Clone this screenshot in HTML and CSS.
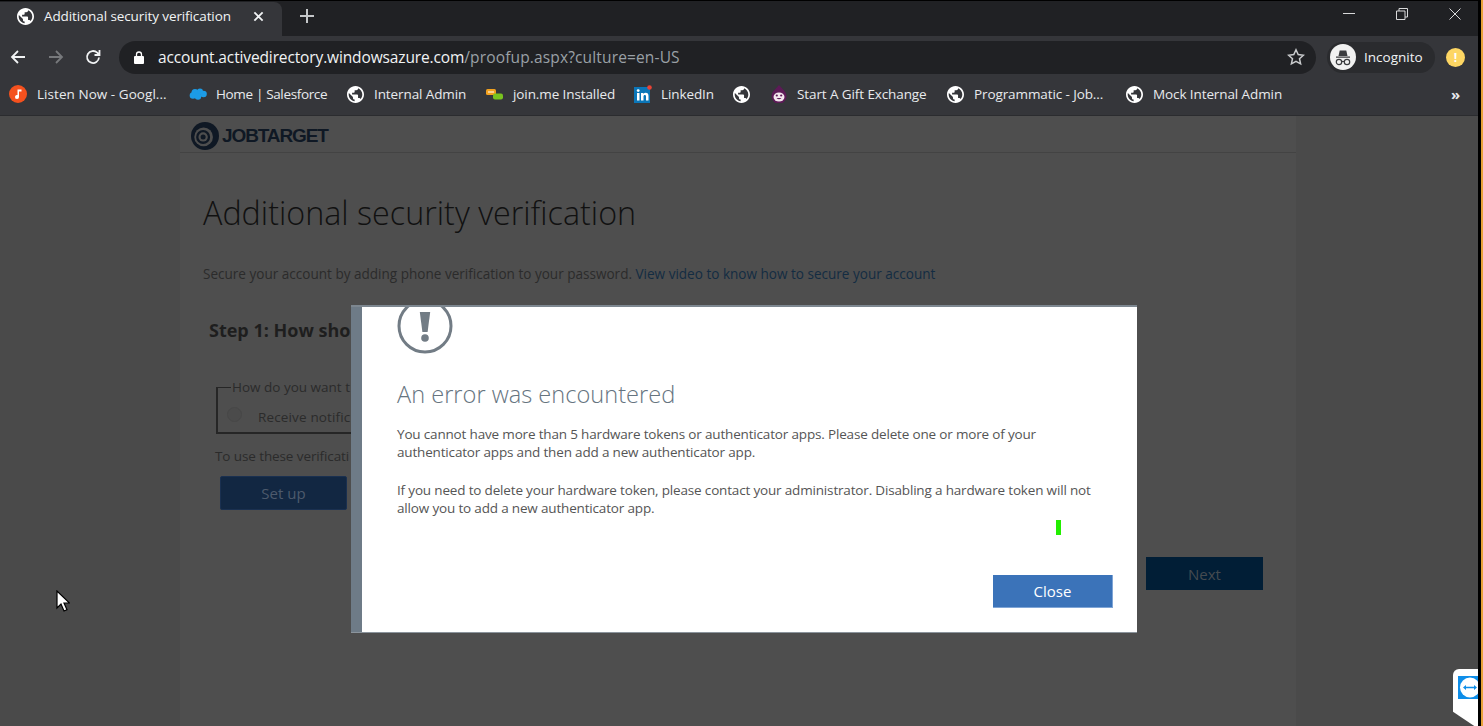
FILE: index.html
```html
<!DOCTYPE html>
<html lang="en">
<head>
  <meta charset="UTF-8" />
  <title>Additional security verification</title>
  <link rel="stylesheet" href="styles.css">
</head>
<body>
  <svg class="defs" width="0" height="0">
    <symbol id="globe" viewBox="2 2 20 20">
      <path fill="#fff" d="M12 2C6.48 2 2 6.48 2 12s4.48 10 10 10 10-4.48 10-10S17.52 2 12 2zm-1 17.93c-3.95-.49-7-3.85-7-7.93 0-.62.08-1.21.21-1.79L9 15v1c0 1.1.9 2 2 2v1.93zm6.9-2.54c-.26-.81-1-1.39-1.9-1.39h-1v-3c0-.55-.45-1-1-1H8v-2h2c.55 0 1-.45 1-1V7h2c1.1 0 2-.9 2-2v-.41c2.93 1.19 5 4.06 5 7.41 0 2.08-.8 3.97-2.1 5.39z"/>
    </symbol>
  </svg>

  <div class="desktop">
    <div class="browser">
      <div class="tabstrip">
        <div class="tab">
          <svg class="globe"><use href="#globe"/></svg>
          <span class="tab-title">Additional security verification</span>
          <svg class="tab-close" viewBox="0 0 12 12"><path d="M1.5 1.5l9 9M10.5 1.5l-9 9"/></svg>
        </div>
        <svg class="new-tab" viewBox="0 0 14 14"><path d="M7 0v14M0 7h14"/></svg>
        <div class="win-controls">
          <svg viewBox="0 0 12 12"><path d="M0 5.5h12"/></svg>
          <svg viewBox="0 0 12 12"><path d="M.5 3h8.500v8.500H.5zM3 3V.5h8.500V9H9"/></svg>
          <svg viewBox="0 0 12 12"><path d="M.5.5l11 11M11.500.5l-11 11"/></svg>
        </div>
      </div>

      <div class="toolbar">
        <svg class="nav-btn" viewBox="0 0 16 16"><path d="M15 8H2M8 2L2 8l6 6"/></svg>
        <svg class="nav-btn disabled" viewBox="0 0 16 16"><path d="M1 8h13M8 2l6 6-6 6"/></svg>
        <svg class="nav-btn" viewBox="0 0 16 16"><path d="M14 8.500A6 6 0 1 1 12.200 3.700L14.500 6M14.500 1v5h-5"/></svg>
        <div class="omnibox">
          <svg class="lock" viewBox="0 0 10 13"><path d="M2.500 6V3.500a2.500 2.500 0 0 1 5 0V6" fill="none" stroke="#fff" stroke-width="1.300"/><rect y="5" width="10" height="8" rx="1" fill="#fff"/></svg>
          <span class="url">account.activedirectory.windowsazure.com<span class="url-rest">/proofup.aspx?culture=en-US</span></span>
          <svg class="star" viewBox="0 0 18 18"><path d="M9 1.800l2.200 4.800 5.200.6-3.900 3.500 1.100 5.200L9 13.300l-4.600 2.600 1.100-5.200L1.600 7.200l5.200-.6z"/></svg>
        </div>
        <div class="incognito">
          <svg class="incognito-icon" viewBox="0 0 26 26">
            <circle cx="13" cy="13" r="13" fill="#f1f1f1"/>
            <path d="M6 12.500h14v1.200H6zM8.500 12l1.200-5.500h6.600l1.200 5.500z" fill="#3a3b3e"/>
            <circle cx="9" cy="18" r="2.700" fill="none" stroke="#3a3b3e" stroke-width="1.200"/>
            <circle cx="17" cy="18" r="2.700" fill="none" stroke="#3a3b3e" stroke-width="1.200"/>
            <path d="M11.700 17.500h2.600" stroke="#3a3b3e" stroke-width="1.200"/>
          </svg>
          <span class="incognito-label">Incognito</span>
        </div>
        <div class="alert">!</div>
      </div>

      <div class="bookmarks">
        <div class="bookmark">
          <svg class="bm-icon first" viewBox="0 0 18 18"><circle cx="9" cy="9" r="9" fill="#f4511e"/><path d="M8.500 4.500h4v2h-2.500v5.500a2 2 0 1 1-1.500-1.900z" fill="#fff"/></svg>
          <span class="wide">Listen Now - Googl...</span>
        </div>
        <div class="bookmark">
          <svg class="bm-icon" viewBox="0 0 18 18"><g fill="#1c9ce6"><circle cx="6" cy="7.500" r="3.500"/><circle cx="11" cy="6.500" r="3"/><circle cx="14.500" cy="9" r="3.300"/><circle cx="4" cy="10.500" r="3.300"/><circle cx="9" cy="11.500" r="3.200"/></g></svg>
          <span class="narrow">Home | Salesforce</span>
        </div>
        <div class="bookmark">
          <svg class="globe"><use href="#globe"/></svg>
          <span>Internal Admin</span>
        </div>
        <div class="bookmark">
          <svg class="bm-icon" viewBox="0 0 18 18"><rect x="0" y="4" width="10" height="6" rx="1.500" fill="#f2a11f"/><path d="M2 7h6" stroke="#fff"/><rect x="7" y="8.500" width="10" height="6" rx="2" fill="#79c31f"/></svg>
          <span>join.me Installed</span>
        </div>
        <div class="bookmark">
          <svg class="bm-icon" viewBox="0 0 18 18">
            <rect y="2" width="16" height="16" fill="#0b76b8"/>
            <path d="M3 8h2.500v7.500H3zM7 8h2.400v1c.6-.8 1.400-1.200 2.300-1.200 1.800 0 2.800 1.100 2.800 3.100v4.600H12v-4.100c0-1-.4-1.500-1.200-1.500s-1.300.6-1.300 1.500v4.100H7z" fill="#fff"/>
            <circle cx="4.200" cy="5.600" r="1.400" fill="#fff"/>
            <circle cx="15.500" cy="2.500" r="2.300" fill="#ea4335"/>
          </svg>
          <span>LinkedIn</span>
        </div>
        <div class="bookmark">
          <svg class="globe"><use href="#globe"/></svg>
        </div>
        <div class="bookmark">
          <svg class="bm-icon" viewBox="0 0 18 18">
            <path d="M9 0l5.500 6a7.500 7.500 0 1 1-11 0z" fill="#5d1a57"/>
            <ellipse cx="9" cy="12" rx="5.500" ry="4.500" fill="#f4e6ee"/>
            <circle cx="6.800" cy="10.500" r="1.100" fill="#5d1a57"/>
            <circle cx="11.200" cy="10.500" r="1.100" fill="#5d1a57"/>
            <path d="M6.500 13q2.500 2.500 5 0z" fill="#5d1a57"/>
          </svg>
          <span>Start A Gift Exchange</span>
        </div>
        <div class="bookmark">
          <svg class="globe"><use href="#globe"/></svg>
          <span>Programmatic - Job...</span>
        </div>
        <div class="bookmark">
          <svg class="globe"><use href="#globe"/></svg>
          <span>Mock Internal Admin</span>
        </div>
        <span class="more">»</span>
      </div>

      <div class="page">
        <div class="content">
          <div class="site-header">
            <svg class="logo-mark" viewBox="0 0 30 30">
              <circle cx="15" cy="15" r="15" fill="#0f1824"/>
              <circle cx="13.500" cy="16" r="10" fill="#4e4e4e"/>
              <circle cx="13" cy="16" r="7.500" fill="#0f1824"/>
              <circle cx="13" cy="16" r="5" fill="#4e4e4e"/>
              <circle cx="13" cy="16" r="2.700" fill="#0f1824"/>
            </svg>
            <span class="logo-text">JOBTARGET</span>
          </div>

          <div class="main">
            <h1>Additional security verification</h1>
            <p class="intro">Secure your account by adding phone verification to your password. <a href="#">View video to know how to secure your account</a></p>
            <h2>Step 1: How sho</h2>
            <fieldset class="method">
              <legend>How do you want t</legend>
              <label class="method-option"><span class="radio"></span>Receive notific</label>
            </fieldset>
            <p class="hint">To use these verificati</p>
            <button class="setup-btn">Set up</button>
            <button class="next-btn">Next</button>
          </div>
        </div>

        <div class="modal">
          <div class="modal-strip"></div>
          <div class="modal-body">
            <svg class="error-icon" viewBox="0 0 56 56">
              <circle cx="28" cy="28" r="26" fill="none" stroke="#727c85" stroke-width="3"/>
              <path d="M22.800 14h10.400l-2.600 20h-5.200z" fill="#727c85"/>
              <circle cx="28" cy="40" r="3.800" fill="#727c85"/>
            </svg>
            <div class="modal-title">An error was encountered</div>
            <p class="modal-text">You cannot have more than 5 hardware tokens or authenticator apps. Please delete one or more of your authenticator apps and then add a new authenticator app.</p>
            <p class="modal-text">If you need to delete your hardware token, please contact your administrator. Disabling a hardware token will not allow you to add a new authenticator app.</p>
            <button class="close-btn">Close</button>
            <div class="green-mark"></div>
          </div>
        </div>

        <svg class="cursor" viewBox="0 0 14 22"><path d="M1 1v17l4-4 3 7 3-1.300-3-6.700h5.500z" fill="#fff" stroke="#000" stroke-width="1.200"/></svg>

        <div class="teamviewer">
          <svg class="tv-icon" viewBox="0 0 25 23">
            <rect width="25" height="23" fill="#0e8ee9"/>
            <circle cx="12" cy="11.500" r="10" fill="#fff"/>
            <path d="M5 11.500l3-2.500v1.700h8V9l3 2.500-3 2.500v-1.700H8V14z" fill="#0e8ee9"/>
          </svg>
        </div>
      </div>
    </div>
    <div class="edge"></div>
  </div>
</body>
</html>
```

FILE: styles.css
```css
* {
  box-sizing: border-box;
  margin: 0;
  padding: 0;
}

body {
  font-family: "Open Sans", "Noto Sans", sans-serif;
  overflow: hidden;
  background: #000;
}

.defs {
  position: absolute;
}

.desktop {
  display: flex;
  width: 1483px;
  height: 726px;
}

.browser {
  width: 1478px;
  height: 726px;
  display: flex;
  flex-direction: column;
  border-top: 1px solid #000;
}

.edge {
  width: 5px;
  background: #000;
  border-right: 2px solid #e8a33a;
}

/* tab strip */
.tabstrip {
  height: 35px;
  background: #202124;
  display: flex;
  align-items: flex-start;
  position: relative;
}

.tab {
  width: 282px;
  height: 35px;
  margin-top: 1px;
  padding: 0 11px 7px 17px;
  background: #35363a;
  border-radius: 0 8px 0 0;
  display: flex;
  align-items: center;
  color: #f1f3f4;
  font-size: 13.5px;
  letter-spacing: -0.1px;
}

.globe {
  width: 17px;
  height: 17px;
  flex: none;
}

.tab-title {
  margin-left: 10px;
  flex: 1;
  white-space: nowrap;
}

.tab-close {
  width: 11px;
  height: 11px;
  margin-right: 7px;
  stroke: #f1f3f4;
  stroke-width: 2;
  fill: none;
}

.new-tab {
  width: 14px;
  height: 14px;
  margin: 8px 0 0 18px;
  stroke: #c4c7c9;
  stroke-width: 2;
}

.win-controls {
  margin-left: auto;
  margin-right: 17px;
  padding-top: 7px;
  display: flex;
  gap: 41px;
}

.win-controls svg {
  width: 12px;
  height: 12px;
  stroke: #d8d9da;
  stroke-width: 1;
  fill: none;
}

/* toolbar */
.toolbar {
  height: 42px;
  background: #35363a;
  display: flex;
  align-items: center;
  padding-left: 10px;
}

.nav-btn {
  width: 16px;
  height: 16px;
  margin-right: 22px;
  stroke: #f1f3f4;
  stroke-width: 1.800;
  fill: none;
  flex: none;
}

.nav-btn:nth-child(3) {
  margin-left: -1px;
}

.nav-btn.disabled {
  stroke: #77797c;
}

.omnibox {
  width: 1197px;
  height: 33px;
  margin-left: -4px;
  padding: 0 11px 0 15px;
  background: #202124;
  border-radius: 17px;
  display: flex;
  align-items: center;
  flex: none;
}

.lock {
  width: 10px;
  height: 13px;
  flex: none;
}

.url {
  margin-left: 14px;
  color: #f1f3f4;
  font-size: 15.5px;
  letter-spacing: -0.13px;
  white-space: nowrap;
}

.url-rest {
  color: #9aa0a6;
  letter-spacing: 0.15px;
}

.star {
  width: 18px;
  height: 18px;
  margin-left: auto;
  stroke: #c9cbcd;
  stroke-width: 1.500;
  fill: none;
}

.incognito {
  width: 108px;
  height: 31px;
  margin-left: 11px;
  padding-left: 3px;
  background: #2a2b2e;
  border-radius: 16px;
  display: flex;
  align-items: center;
  flex: none;
}

.incognito-icon {
  width: 26px;
  height: 26px;
}

.incognito-label {
  margin-left: 8px;
  color: #f1f3f4;
  font-size: 13.5px;
}

.alert {
  width: 19px;
  height: 19px;
  margin-left: 11px;
  border-radius: 50%;
  background: #fdd663;
  color: #fff;
  font-size: 12px;
  font-weight: 700;
  line-height: 19px;
  text-align: center;
}

/* bookmarks bar */
.bookmarks {
  height: 38px;
  padding: 0 0 5px 9px;
  background: #35363a;
  border-bottom: 1px solid #2b2c2f;
  display: grid;
  grid-template-columns: 180px 158px 139px 148px 99px 37px 177px 179px 1fr 30px;
  align-items: center;
  color: #e8eaed;
  font-size: 13.5px;
}

.bookmark {
  display: flex;
  align-items: center;
  gap: 10px;
  white-space: nowrap;
  letter-spacing: -0.1px;
}

.bookmark .wide {
  letter-spacing: 0.05px;
}

.bookmark .narrow {
  letter-spacing: -0.35px;
}

.bm-icon {
  width: 18px;
  height: 18px;
  margin-right: -1px;
  flex: none;
}

.bm-icon.first {
  margin-right: 0;
}

.more {
  margin-left: 3px;
  color: #e8eaed;
  font-size: 15px;
  font-weight: 700;
}

/* page behind the dialog */
.page {
  flex: 1;
  background: #4a4a4a;
  position: relative;
  overflow: hidden;
}

.content {
  width: 1116px;
  height: 100%;
  margin-left: 180px;
  background: #4e4e4e;
}

.site-header {
  height: 37px;
  padding: 4px 0 0 11px;
  border-bottom: 1px solid #434343;
  display: flex;
  align-items: center;
  gap: 3px;
}

.logo-mark {
  width: 28px;
  height: 28px;
}

.logo-text {
  color: #0f1824;
  font-family: "Liberation Sans", sans-serif;
  font-size: 19px;
  font-weight: 700;
  letter-spacing: -1.1px;
}

.main {
  padding: 37px 33px 0 23px;
  display: flex;
  flex-direction: column;
  align-items: flex-start;
  color: #232323;
}

h1 {
  font-size: 32.3px;
  font-weight: 300;
  line-height: 44px;
  color: #111;
  white-space: nowrap;
}

.intro {
  margin-top: 30px;
  font-size: 13.55px;
  line-height: 20px;
  color: #2b2b2b;
  white-space: nowrap;
}

.intro a {
  color: #132c42;
  text-decoration: none;
}

h2 {
  margin: 34px 0 0 6px;
  font-size: 18px;
  font-weight: 700;
  line-height: 24px;
  color: #1e1e1e;
  white-space: nowrap;
}

.method {
  width: 140px;
  height: 57px;
  margin: 35px 0 0 13px;
  padding: 0 0 0 9px;
  border: 1px solid #262626;
  border-width: 1px 1px 2px 2px;
}

.method legend {
  padding: 0 1px;
  margin-left: 4px;
  font-size: 13.5px;
  line-height: 20px;
  color: #2b2b2b;
  white-space: nowrap;
}

.method-option {
  display: flex;
  align-items: center;
  padding-top: 11px;
  font-size: 13.5px;
  color: #2b2b2b;
  white-space: nowrap;
  letter-spacing: 0.15px;
}

.radio {
  width: 15px;
  height: 15px;
  margin: -5px 16px 0 0;
  border: 1px solid #474747;
  border-radius: 50%;
  background: #4b4b4b;
  flex: none;
}

.hint {
  margin: 12px 0 0 12px;
  font-size: 13.5px;
  line-height: 20px;
  color: #2b2b2b;
  white-space: nowrap;
  letter-spacing: -0.1px;
}

.setup-btn,
.next-btn {
  font-family: inherit;
  border: none;
}

.setup-btn {
  width: 127px;
  height: 34px;
  margin: 10px 0 0 17px;
  background: #122742;
  border: 1px solid #1a3050;
  border-radius: 2px;
  color: #4d5a6c;
  font-size: 15px;
}

.next-btn {
  width: 117px;
  height: 33px;
  margin-top: 47px;
  align-self: flex-end;
  background: #011e36;
  color: #454b50;
  font-size: 15px;
}

/* dialog */
.modal {
  position: absolute;
  left: 351px;
  top: 189px;
  width: 786px;
  height: 327px;
  display: flex;
  border-top: 2px solid #7d8790;
  box-shadow: 0 1px 0 #8b949c;
}

.modal-strip {
  width: 11px;
  background: #6e7b87;
}

.modal-body {
  flex: 1;
  padding: 0 24px 24px 35px;
  background: #fff;
  display: flex;
  flex-direction: column;
  overflow: hidden;
  position: relative;
}

.error-icon {
  width: 56px;
  height: 56px;
  margin-top: -9px;
  flex: none;
}

.modal-title {
  margin-top: 23px;
  font-size: 23.6px;
  font-weight: 300;
  line-height: 34px;
  color: #66747f;
}

.modal-text {
  margin-top: 14px;
  font-size: 13.5px;
  line-height: 18px;
  letter-spacing: -0.17px;
  color: #555;
}

.modal-text + .modal-text {
  margin-top: 20px;
}

.close-btn {
  width: 120px;
  height: 33px;
  margin-top: auto;
  align-self: flex-end;
  background: #3b73b9;
  border: none;
  border-right: 1px solid #7fa5d6;
  border-bottom: 1px solid #7fa5d6;
  color: #fff;
  font-family: inherit;
  font-size: 15px;
}

.green-mark {
  position: absolute;
  left: 694px;
  top: 213px;
  width: 5px;
  height: 15px;
  background: #22ee00;
}

.cursor {
  position: absolute;
  left: 56px;
  top: 474px;
  width: 14px;
  height: 22px;
}

.teamviewer {
  position: absolute;
  right: 0;
  bottom: 0;
  width: 25px;
  height: 57px;
  padding: 7px 0 0 5px;
  background: #fff;
  border-radius: 6px 0 0 0;
  clip-path: polygon(0 0, 100% 0, 100% 100%, 85% 100%, 0 75%);
  overflow: hidden;
}

.tv-icon {
  width: 25px;
  height: 23px;
  display: block;
}
```
